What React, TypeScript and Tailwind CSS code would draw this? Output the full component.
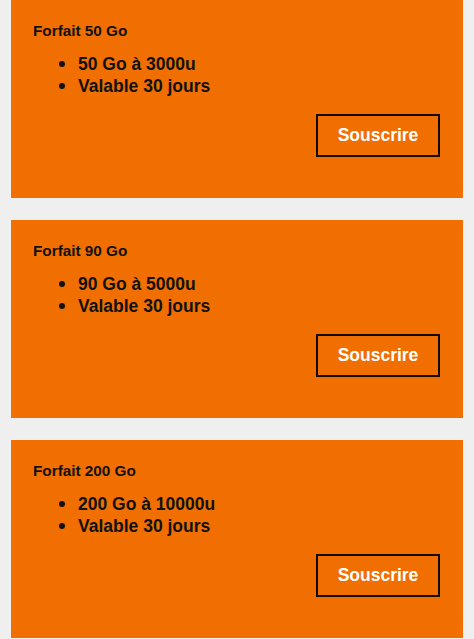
const plans = [
  { title: 'Forfait 50 Go', volume: '50 Go à 3000u' },
  { title: 'Forfait 90 Go', volume: '90 Go à 5000u' },
  { title: 'Forfait 200 Go', volume: '200 Go à 10000u' },
];

function PlanCard({ title, volume }: { title: string; volume: string }) {
  return (
    <div className="bg-[#f16e00] h-[198px] shrink-0 pt-[22px] pl-[22px] pr-[23px] flex flex-col">
      <h2 className="text-[15.3px] leading-[18px] font-bold text-[#111]">{title}</h2>
      <ul className="mt-[13px]">
        {[volume, 'Valable 30 jours'].map((item) => (
          <li key={item} className="flex items-center h-[22px] text-[17.5px] font-bold text-[#111]">
            <span className="ml-[26px] mr-[13px] w-[6px] h-[6px] rounded-full bg-[#111]" />
            {item}
          </li>
        ))}
      </ul>
      <div className="mt-[17px] flex justify-end">
        <button className="w-[124px] h-[43px] border-2 border-[#140800] text-white text-[17.5px] font-bold">
          Souscrire
        </button>
      </div>
    </div>
  );
}

export default function App() {
  return (
    <div
      className="min-h-screen bg-[#efefef] px-[11px] flex flex-col gap-[22px]"
      style={{ fontFamily: '"Liberation Sans", Arial, sans-serif' }}
    >
      {plans.map((p) => (
        <PlanCard key={p.title} {...p} />
      ))}
    </div>
  );
}
